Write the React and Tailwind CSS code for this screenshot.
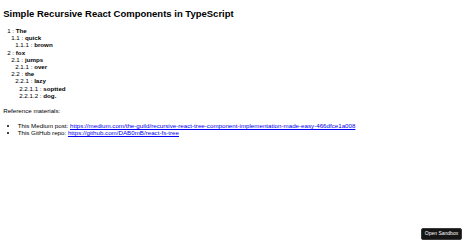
import React from 'react';

const tree = [
  {
    id: '1',
    name: 'The',
    children: [
      { id: '1.1', name: 'quick', children: [{ id: '1.1.1', name: 'brown' }] },
    ],
  },
  {
    id: '2',
    name: 'fox',
    children: [
      { id: '2.1', name: 'jumps', children: [{ id: '2.1.1', name: 'over' }] },
      {
        id: '2.2',
        name: 'the',
        children: [
          {
            id: '2.2.1',
            name: 'lazy',
            children: [
              { id: '2.2.1.1', name: 'soptted' },
              { id: '2.2.1.2', name: 'dog.' },
            ],
          },
        ],
      },
    ],
  },
];

// recursive node: each level is pushed in a little more
function TreeNode({ node }) {
  return (
    <div className="ml-[4px]">
      <div className="leading-[7.2px] whitespace-nowrap">
        {node.id} : <b className="font-bold">{node.name}</b>
      </div>
      {node.children && node.children.map((c) => <TreeNode key={c.id} node={c} />)}
    </div>
  );
}

export default function App() {
  return (
    <div
      className="relative h-[248px] w-full overflow-hidden bg-white px-[3.2px] text-[6.2px] text-black"
      style={{ fontFamily: '"Liberation Sans", Arial, sans-serif' }}
    >
      <h2 className="pt-[7.9px] mb-[8px] text-[9.5px] font-bold leading-[11px]">
        Simple Recursive React Components in TypeScript
      </h2>

      <div>
        {tree.map((n) => (
          <TreeNode key={n.id} node={n} />
        ))}
      </div>

      <p className="mt-[8.5px] leading-[7.2px]">Reference materials:</p>

      <ul className="mt-[7.5px] list-disc pl-[14.5px] leading-[7px]">
        <li>
          This Medium post:{' '}
          <a
            className="text-[#0000ee] underline"
            href="#"
          >
            https://medium.com/the-guild/recursive-react-tree-component-implementation-made-easy-466dfce1a008
          </a>
        </li>
        <li>
          This GitHub repo:{' '}
          <a className="text-[#0000ee] underline" href="#">
            https://github.com/DAB0mB/react-fs-tree
          </a>
        </li>
      </ul>

      <button className="absolute bottom-[8px] right-[12px] flex h-[12px] w-[41px] items-center justify-center rounded-[2px] border border-[#3a3a3a] bg-[#151515] text-[5px] text-white">
        Open Sandbox
      </button>
    </div>
  );
}
